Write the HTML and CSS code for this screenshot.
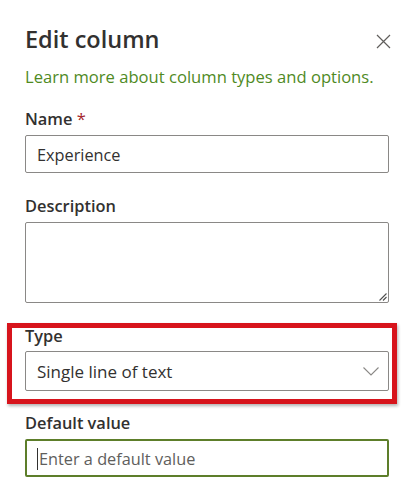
FILE: index.html
```
<!DOCTYPE html>
<html lang="en">
<head>
<meta charset="utf-8">
<title>Edit column</title>
<link rel="stylesheet" href="styles.css">
</head>
<body>
<div class="panel">
  <header class="head">
    <h1 class="title">Edit column</h1>
    <button class="close" aria-label="Close">
      <svg width="15" height="15" viewBox="0 0 15 15"><path d="M1 1 L14 14 M14 1 L1 14" stroke="#605e5c" stroke-width="1.2" fill="none"/></svg>
    </button>
  </header>
  <a class="learn" href="#">Learn more about column types and options.</a>

  <div class="field first">
    <div class="label">Name <span class="req">*</span></div>
    <div class="box text">Experience</div>
  </div>

  <div class="field">
    <div class="label">Description</div>
    <div class="box area">
      <svg class="grip" width="9" height="9" viewBox="0 0 9 9"><path d="M8.5 1.5 L1.5 8.5 M8.5 5 L5 8.5" stroke="#505050" stroke-width="1.1" fill="none"/></svg>
    </div>
  </div>

  <div class="field marked">
    <div class="label">Type</div>
    <div class="box select">
      <span>Single line of text</span>
      <svg class="chev" width="16" height="9" viewBox="0 0 16 9"><path d="M0.5 0.5 L8 8 L15.5 0.5" stroke="#8a8886" stroke-width="1.1" fill="none"/></svg>
    </div>
  </div>

  <div class="field last">
    <div class="label">Default value</div>
    <div class="box text focus"><span class="caret"></span><span class="ph">Enter a default value</span></div>
  </div>
</div>
</body>
</html>
```
FILE: styles.css
```
html, body {
  margin: 0;
  padding: 0;
  background: #ffffff;
}
body {
  font-family: "Open Sans", "Noto Sans", sans-serif;
  color: #323130;
}
.panel {
  padding: 23px 16px 0 25px;
  width: 364px;
}
.head {
  display: flex;
  align-items: center;
  justify-content: space-between;
  height: 32px;
}
.title {
  margin: 0;
  font-size: 23.5px;
  line-height: 32px;
  font-weight: 600;
  color: #323130;
}
.close {
  border: 0;
  background: none;
  padding: 0;
  width: 15px;
  height: 15px;
  margin-right: -2px;
  margin-top: 4px;
  display: flex;
}
.learn {
  display: block;
  margin-top: 10px;
  font-size: 16.6px;
  line-height: 24px;
  color: #4f8a1f;
  text-decoration: none;
}
.field {
  margin-top: 20px;
}
.field.first {
  margin-top: 17px;
}
.label {
  font-size: 16.4px;
  line-height: 22px;
  font-weight: 600;
  padding-top: 2px;
  margin-bottom: 5px;
}
.req {
  color: #a4262c;
  font-weight: 400;
}
.box {
  box-sizing: border-box;
  border: 1px solid #8a8886;
  border-radius: 2px;
  background: #fff;
  width: 364px;
}
.text {
  height: 38px;
  padding: 2px 11px 0;
  font-size: 16.3px;
  line-height: 34px;
}
.area {
  height: 81px;
  position: relative;
}
.grip {
  position: absolute;
  right: 1px;
  bottom: 1px;
}
.select {
  height: 40px;
  padding: 0 9px 0 11px;
  display: flex;
  align-items: center;
  justify-content: space-between;
  font-size: 17px;
}
.chev {
  margin-top: 1px;
}
.marked {
  position: relative;
  margin-top: 20px;
}
.marked .label {
  margin-bottom: 4px;
}
.marked::after {
  content: "";
  position: absolute;
  top: 0;
  left: -18px;
  right: -8px;
  bottom: -13px;
  border: 5px solid #d7141c;
  box-shadow: 1px 2px 3px rgba(0, 0, 0, 0.3);
  pointer-events: none;
}
.field.last {
  margin-top: 19px;
}
.focus {
  border: 2px solid #5d7e2a;
  padding: 2px 10px 0;
  line-height: 32px;
  display: flex;
  align-items: center;
}
.caret {
  display: inline-block;
  width: 1px;
  height: 22px;
  background: #323130;
  margin-right: 1px;
}
.ph {
  color: #605e5c;
}
```
